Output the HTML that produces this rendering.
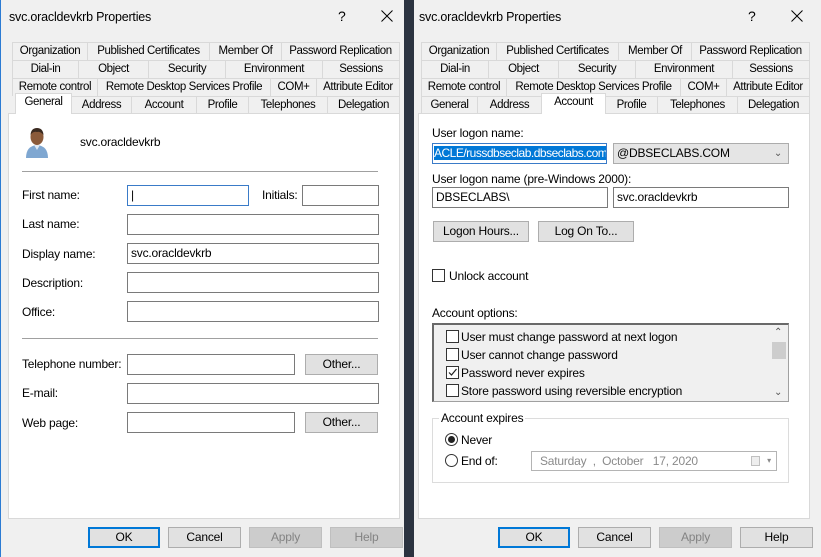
<!DOCTYPE html>
<html><head><meta charset="utf-8"><style>
*{box-sizing:border-box;margin:0;padding:0}
body{width:821px;height:557px;position:relative;overflow:hidden;background:#f0f0f0;font-family:"Liberation Sans",sans-serif;font-size:12px;color:#000;letter-spacing:-0.2px}
.a{position:absolute}
.t{position:absolute;white-space:nowrap;line-height:14px}
.tab{position:absolute;height:18px;border:1px solid #d9d9d9;border-bottom:none;background:#f0f0f0;text-align:center;line-height:16px;white-space:nowrap;font-size:11.5px;letter-spacing:-0.4px;overflow:hidden}
.sel{background:#fff;height:21px;border-color:#d9d9d9;z-index:2}
.in{position:absolute;border:1px solid #7a7a7a;background:#fff;height:21px;line-height:19px;padding-left:3px;white-space:nowrap;overflow:hidden}
.btn{position:absolute;border:1px solid #adadad;background:#e1e1e1;height:21px;text-align:center;line-height:19px}
.cb{position:absolute;width:13px;height:13px;border:1px solid #333;background:#fff}
.sep{position:absolute;height:1px;background:#a0a0a0}
.win{position:absolute;top:0;height:557px;background:#f0f0f0}
.panel{position:absolute;background:#fff;border:1px solid #d9d9d9}
</style></head><body>

<!-- LEFT WINDOW -->
<div class="win" style="left:0;width:404px;border-left:1px solid #2b7bd3"></div>
<div class="t" style="left:9px;top:10px;font-size:12.5px">svc.oracldevkrb Properties</div>
<div class="t" style="left:338px;top:9px;font-size:14px">?</div>
<svg class="a" style="left:381px;top:10px" width="12" height="12"><path d="M0.5 0.5L11.5 11.5M11.5 0.5L0.5 11.5" stroke="#000" stroke-width="1"/></svg>

<div class="tab" style="left:12px;top:42px;width:76px">Organization</div>
<div class="tab" style="left:87px;top:42px;width:123px">Published Certificates</div>
<div class="tab" style="left:209px;top:42px;width:73px">Member Of</div>
<div class="tab" style="left:281px;top:42px;width:119px">Password Replication</div>
<div class="tab" style="left:12px;top:60px;width:67px">Dial-in</div>
<div class="tab" style="left:78px;top:60px;width:71px">Object</div>
<div class="tab" style="left:148px;top:60px;width:78px">Security</div>
<div class="tab" style="left:225px;top:60px;width:98px">Environment</div>
<div class="tab" style="left:322px;top:60px;width:78px">Sessions</div>
<div class="tab" style="left:12px;top:78px;width:86px">Remote control</div>
<div class="tab" style="left:97px;top:78px;width:174px">Remote Desktop Services Profile</div>
<div class="tab" style="left:270px;top:78px;width:47px">COM+</div>
<div class="tab" style="left:316px;top:78px;width:84px">Attribute Editor</div>
<div class="tab" style="left:71px;top:96px;width:61px">Address</div>
<div class="tab" style="left:131px;top:96px;width:66px">Account</div>
<div class="tab" style="left:196px;top:96px;width:53px">Profile</div>
<div class="tab" style="left:248px;top:96px;width:80px">Telephones</div>
<div class="tab" style="left:327px;top:96px;width:73px">Delegation</div>
<div class="panel" style="left:8px;top:113px;width:392px;height:406px"></div>
<div class="tab sel" style="left:15px;top:93px;width:57px">General</div>

<svg class="a" style="left:24px;top:126px" width="26" height="32" viewBox="0 0 26 32">
<path d="M2 32 Q2 20 13 19 Q24 20 24 32Z" fill="#7fa7d1"/>
<path d="M10 19 L13 24 L16 19Z" fill="#dfe9f5"/>
<ellipse cx="13" cy="11" rx="6.5" ry="8" fill="#8a5a3a"/>
<path d="M6.5 9 Q7 2 13 2 Q19 2 19.5 9 Q16 5 13 6 Q9 5 6.5 9Z" fill="#3a2a20"/>
</svg>
<div class="t" style="left:80px;top:135px">svc.oracldevkrb</div>
<div class="sep" style="left:22px;top:171px;width:356px"></div>

<div class="t" style="left:22px;top:188px">First name:</div>
<div class="in" style="left:127px;top:185px;width:122px;border-color:#3a7bc8">|</div>
<div class="t" style="left:262px;top:188px">Initials:</div>
<div class="in" style="left:302px;top:185px;width:77px"></div>
<div class="t" style="left:22px;top:217px">Last name:</div>
<div class="in" style="left:127px;top:214px;width:252px"></div>
<div class="t" style="left:22px;top:247px">Display name:</div>
<div class="in" style="left:127px;top:243px;width:252px">svc.oracldevkrb</div>
<div class="t" style="left:22px;top:276px">Description:</div>
<div class="in" style="left:127px;top:272px;width:252px"></div>
<div class="t" style="left:22px;top:305px">Office:</div>
<div class="in" style="left:127px;top:301px;width:252px"></div>
<div class="sep" style="left:22px;top:338px;width:356px"></div>
<div class="t" style="left:22px;top:357px">Telephone number:</div>
<div class="in" style="left:127px;top:354px;width:168px"></div>
<div class="btn" style="left:305px;top:354px;width:73px;background:#e1e1e1">Other...</div>
<div class="t" style="left:22px;top:386px">E-mail:</div>
<div class="in" style="left:127px;top:383px;width:252px"></div>
<div class="t" style="left:22px;top:416px">Web page:</div>
<div class="in" style="left:127px;top:412px;width:168px"></div>
<div class="btn" style="left:305px;top:412px;width:73px">Other...</div>

<div class="btn" style="left:88px;top:527px;width:72px;border:2px solid #0078d7;line-height:17px">OK</div>
<div class="btn" style="left:168px;top:527px;width:73px">Cancel</div>
<div class="btn" style="left:249px;top:527px;width:73px;background:#cccccc;border-color:#bfbfbf;color:#838383">Apply</div>
<div class="btn" style="left:330px;top:527px;width:73px;background:#cccccc;border-color:#bfbfbf;color:#838383">Help</div>

<!-- DIVIDER -->
<div class="a" style="left:404px;top:0;width:10px;height:557px;background:#2b3340"></div>

<!-- RIGHT WINDOW -->
<div class="win" style="left:414px;width:407px"></div>
<div class="t" style="left:419px;top:10px;font-size:12.5px">svc.oracldevkrb Properties</div>
<div class="t" style="left:748px;top:9px;font-size:14px">?</div>
<svg class="a" style="left:791px;top:10px" width="12" height="12"><path d="M0.5 0.5L11.5 11.5M11.5 0.5L0.5 11.5" stroke="#000" stroke-width="1"/></svg>

<div class="tab" style="left:421px;top:42px;width:76px">Organization</div>
<div class="tab" style="left:496px;top:42px;width:123px">Published Certificates</div>
<div class="tab" style="left:618px;top:42px;width:74px">Member Of</div>
<div class="tab" style="left:691px;top:42px;width:119px">Password Replication</div>
<div class="tab" style="left:421px;top:60px;width:68px">Dial-in</div>
<div class="tab" style="left:488px;top:60px;width:71px">Object</div>
<div class="tab" style="left:558px;top:60px;width:78px">Security</div>
<div class="tab" style="left:635px;top:60px;width:98px">Environment</div>
<div class="tab" style="left:732px;top:60px;width:78px">Sessions</div>
<div class="tab" style="left:421px;top:78px;width:86px">Remote control</div>
<div class="tab" style="left:506px;top:78px;width:175px">Remote Desktop Services Profile</div>
<div class="tab" style="left:680px;top:78px;width:47px">COM+</div>
<div class="tab" style="left:726px;top:78px;width:84px">Attribute Editor</div>
<div class="tab" style="left:421px;top:96px;width:57px">General</div>
<div class="tab" style="left:477px;top:96px;width:65px">Address</div>
<div class="tab" style="left:605px;top:96px;width:53px">Profile</div>
<div class="tab" style="left:657px;top:96px;width:81px">Telephones</div>
<div class="tab" style="left:737px;top:96px;width:73px">Delegation</div>
<div class="panel" style="left:418px;top:113px;width:392px;height:406px"></div>
<div class="tab sel" style="left:541px;top:93px;width:65px">Account</div>

<div class="t" style="left:432px;top:126px">User logon name:</div>
<div class="in" style="left:432px;top:143px;width:175px;border-color:#3a7bc8;padding-left:1px;letter-spacing:-0.5px"><span style="background:#0078d7;color:#fff">ACLE/russdbseclab.dbseclabs.com</span></div>
<div class="in" style="left:613px;top:143px;width:176px;background:#e5e5e5;border-color:#acacac">@DBSECLABS.COM<span style="position:absolute;right:6px;top:0;font-size:10px;color:#555">&#8964;</span></div>
<div class="t" style="left:432px;top:172px">User logon name (pre-Windows 2000):</div>
<div class="in" style="left:432px;top:187px;width:176px">DBSECLABS\</div>
<div class="in" style="left:613px;top:187px;width:176px">svc.oracldevkrb</div>
<div class="btn" style="left:433px;top:221px;width:96px">Logon Hours...</div>
<div class="btn" style="left:538px;top:221px;width:96px">Log On To...</div>
<div class="cb" style="left:432px;top:269px"></div>
<div class="t" style="left:449px;top:269px">Unlock account</div>

<div class="t" style="left:432px;top:306px">Account options:</div>
<div class="a" style="left:432px;top:323px;width:357px;height:79px;background:#f0f0f0;border:1px solid #a0a0a0;border-top:2px solid #696969;border-left:2px solid #696969"></div>
<div class="a" style="left:770px;top:325px;width:18px;height:76px;background:#f0f0f0"></div>
<div class="a" style="left:772px;top:342px;width:14px;height:17px;background:#cdcdcd"></div>
<div class="t" style="left:774px;top:326px;font-size:10px;color:#555">&#8963;</div>
<div class="t" style="left:774px;top:386px;font-size:10px;color:#555">&#8964;</div>
<div class="cb" style="left:446px;top:330px"></div><div class="t" style="left:461px;top:330px">User must change password at next logon</div>
<div class="cb" style="left:446px;top:348px"></div><div class="t" style="left:461px;top:348px">User cannot change password</div>
<div class="cb" style="left:446px;top:366px"><svg width="11" height="11" style="position:absolute;left:0;top:0"><path d="M2 5.5 L4.5 8 L9.5 2" stroke="#222" stroke-width="1.2" fill="none"/></svg></div><div class="t" style="left:461px;top:366px">Password never expires</div>
<div class="cb" style="left:446px;top:384px"></div><div class="t" style="left:461px;top:384px">Store password using reversible encryption</div>

<div class="a" style="left:432px;top:418px;width:357px;height:65px;border:1px solid #dcdcdc"></div>
<div class="t" style="left:439px;top:411px;background:#fff;padding:0 2px">Account expires</div>
<div class="a" style="left:445px;top:433px;width:13px;height:13px;border:1px solid #333;border-radius:50%;background:#fff"><div class="a" style="left:2px;top:2px;width:7px;height:7px;border-radius:50%;background:#222"></div></div>
<div class="t" style="left:461px;top:433px">Never</div>
<div class="a" style="left:445px;top:454px;width:13px;height:13px;border:1px solid #333;border-radius:50%;background:#fff"></div>
<div class="t" style="left:461px;top:454px">End of:</div>
<div class="in" style="left:531px;top:451px;width:246px;height:20px;border-color:#b4b4b4;color:#8a8a8a;padding-left:8px;line-height:18px">Saturday &nbsp;, &nbsp;October &nbsp;&nbsp;17, 2020<span style="position:absolute;right:16px;top:4px;width:9px;height:10px;border:1px solid #c0c0c0;background:#eee"></span><span style="position:absolute;right:5px;top:0;font-size:8px">▾</span></div>

<div class="btn" style="left:498px;top:527px;width:72px;border:2px solid #0078d7;line-height:17px">OK</div>
<div class="btn" style="left:578px;top:527px;width:73px">Cancel</div>
<div class="btn" style="left:659px;top:527px;width:73px;background:#cccccc;border-color:#bfbfbf;color:#838383">Apply</div>
<div class="btn" style="left:740px;top:527px;width:73px">Help</div>
</body></html>
